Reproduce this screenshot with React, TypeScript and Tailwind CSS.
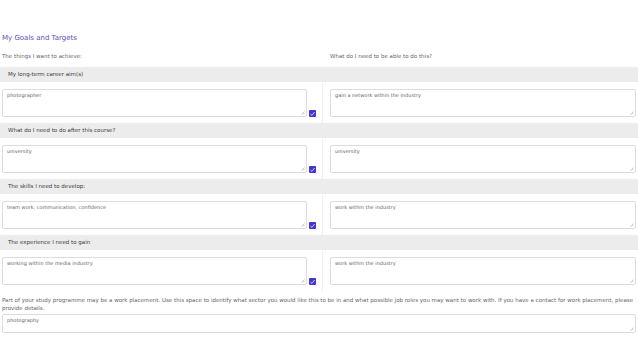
const rows = [
  { label: "My long-term career aim(s)", left: "photographer", right: "gain a network within the industry" },
  { label: "What do I need to do after this course?", left: "university", right: "university" },
  { label: "The skills I need to develop:", left: "team work, communication, confidence", right: "work within the industry" },
  { label: "The experience I need to gain", left: "working within the media industry", right: "work within the industry" },
]

const SaveIcon = () => (
  <svg width="7" height="7" viewBox="0 0 7 7" className="shrink-0">
    <rect x="0" y="0" width="7" height="7" rx="1" fill="#4434d8" />
    <path d="M1.5 4.2 L3 5.3 L5.6 2" stroke="#dcd8ff" strokeWidth="0.9" fill="none" />
  </svg>
)

const Box = ({ value, className }: { value: string; className: string }) => (
  <div className={`relative ${className}`}>
    <textarea
      readOnly
      defaultValue={value}
      className="w-full h-full resize-none border border-[#dcdcdc] rounded-[2px] bg-white px-[4px] py-[2px] text-[5px] leading-[7px] text-[#666] outline-none"
    />
    <svg width="4" height="4" viewBox="0 0 4 4" className="absolute right-[2px] bottom-[2px]">
      <path d="M0.5 3.5 L3.5 0.5 M2 3.5 L3.5 2" stroke="#b5b5b5" strokeWidth="0.7" />
    </svg>
  </div>
)

const App = () => {
  return (
    <div className="w-[638px] h-[359px] bg-white pt-[33px] font-['DejaVu_Sans',Verdana,sans-serif] overflow-hidden">
      <div className="pl-[2px] text-[7px] leading-[10px] text-[#5a4ecb]">My Goals and Targets</div>
      <div className="grid grid-cols-[330px_1fr] mt-[9px] text-[5.5px] leading-[8px] text-[#666]">
        <div className="pl-[2px]">The things I want to achieve:</div>
        <div>What do I need to be able to do this?</div>
      </div>
      <div className="mt-[7px]">
        {rows.map((r) => (
          <div key={r.label}>
            <div className="h-[15px] bg-[#ececec] pl-[8px] flex items-center text-[5.5px] text-[#3a3a3a]">{r.label}</div>
            <div className="grid grid-cols-[322px_1fr] h-[41px]">
              <div className="pl-[2px] pt-[7px] pb-[6px] flex items-end gap-[2px]">
                <Box value={r.left} className="w-[305px] h-[28px]" />
                <SaveIcon />
              </div>
              <div className="border-l border-[#f0f0f0] pl-[7px] pr-[2px] pt-[7px] pb-[6px] flex">
                <Box value={r.right} className="flex-1 h-[28px]" />
              </div>
            </div>
          </div>
        ))}
      </div>
      <div className="px-[2px] mt-[5px] text-[5.5px] leading-[8px] text-[#666]">
        Part of your study programme may be a work placement. Use this space to identify what sector you would like this to be in and what possible job roles you may want to work with. If you have a contact for work placement, please provide details.
      </div>
      <div className="px-[2px] mt-[2px] flex">
        <Box value="photography" className="flex-1 h-[19px]" />
      </div>
    </div>
  )
}

export default App
